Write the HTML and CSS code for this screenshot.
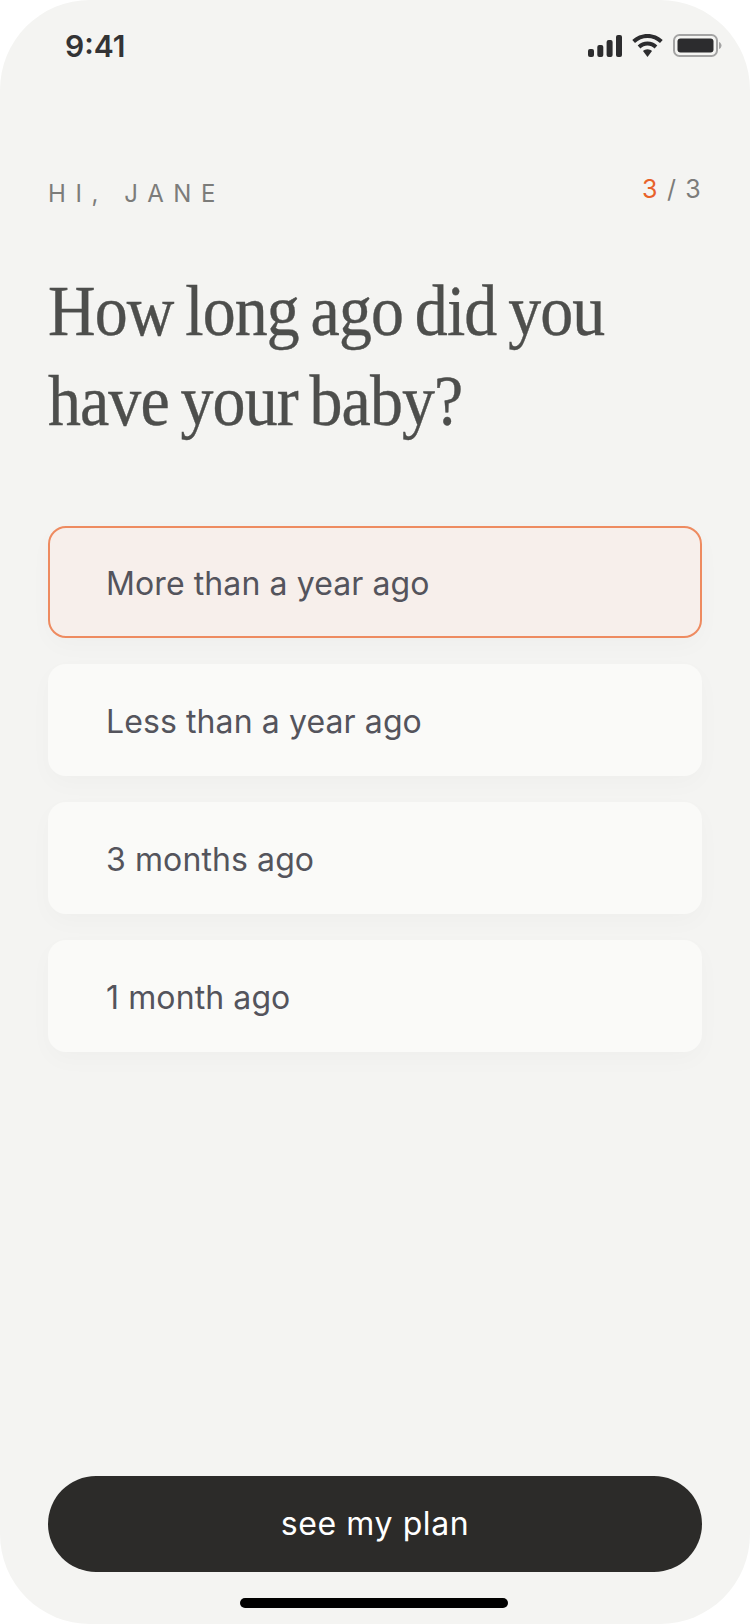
FILE: index.html
```html
<!doctype html>
<html lang="en">
  <head>
    <meta charset="UTF-8" />
    <meta name="viewport" content="width=device-width, initial-scale=1.0" />
    <title>How long ago did you have your baby?</title>
    <link rel="stylesheet" href="styles.css">
  </head>
  <body>
    <div class="screen">
      <div class="status-bar">
        <span class="time">9:41</span>
        <div class="status-icons">
          <svg class="icon-signal" width="34" height="22" viewBox="0 0 34 22">
            <rect x="0" y="14" width="6" height="8" rx="2" />
            <rect x="9.300" y="10" width="6" height="12" rx="2" />
            <rect x="18.600" y="5" width="6" height="17" rx="2" />
            <rect x="28" y="0" width="6" height="22" rx="2" />
          </svg>
          <svg class="icon-wifi" width="31" height="23" viewBox="0 0 31 23">
            <path d="M15.500 0C9.600 0 4.300 2.300 0.300 6.100L3 9C6.300 5.900 10.700 4 15.500 4S24.700 5.900 28 9L30.700 6.100C26.700 2.300 21.400 0 15.500 0Z" />
            <path d="M15.500 7.600C11.700 7.600 8.300 9.100 5.700 11.500L8.400 14.400C10.300 12.700 12.800 11.600 15.500 11.600S20.700 12.700 22.600 14.400L25.300 11.500C22.700 9.100 19.300 7.600 15.500 7.600Z" />
            <path d="M15.500 15.200C13.700 15.200 12.200 15.900 11 17L15.500 23L20 17C18.800 15.900 17.300 15.200 15.500 15.200Z" />
          </svg>
          <svg class="icon-battery" width="49" height="23" viewBox="0 0 49 23">
            <rect x="1" y="1" width="43" height="21" rx="5.500" class="battery-case" />
            <rect x="4.500" y="4.500" width="36" height="14" rx="3" />
            <path d="M46 8C47.500 8.500 48.500 10 48.500 11.500S47.500 14.500 46 15Z" class="battery-nub" />
          </svg>
        </div>
      </div>

      <div class="top-row">
        <span class="greeting">HI, JANE</span>
        <span class="steps"><span class="step-current">3</span> / 3</span>
      </div>

      <h1 class="question">How long ago did you<br>have your baby?</h1>

      <div class="options">
        <div class="option selected">More than a year ago</div>
        <div class="option">Less than a year ago</div>
        <div class="option">3 months ago</div>
        <div class="option">1 month ago</div>
      </div>

      <button class="plan-button">see my plan</button>
      <div class="home-bar"></div>
    </div>
  </body>
</html>
```

FILE: styles.css
```css
body {
  margin: 0;
  background-color: #fff;
  font-family: Inter, "Liberation Sans", sans-serif;
  font-optical-sizing: none;
}
.screen {
  width: 750px;
  height: 1624px;
  box-sizing: border-box;
  padding: 0 48px;
  background-color: #f4f4f2;
  border-radius: 90px;
  overflow: hidden;
  display: flex;
  flex-direction: column;
}
.status-bar {
  display: flex;
  justify-content: space-between;
  align-items: center;
  height: 23px;
  margin-top: 34px;
  padding-left: 17px;
  margin-right: -20px;
}
.time {
  font-size: 30px;
  font-weight: 600;
  color: #333335;
}
.status-icons {
  display: flex;
  align-items: center;
  gap: 10px;
}
.status-icons svg {
  display: block;
  fill: #2c2c2e;
}
.icon-signal {
  margin-top: 1px;
}
.battery-case {
  fill: none;
  stroke: #a4a4a4;
  stroke-width: 2;
}
.battery-nub {
  fill: #a4a4a4;
}
.top-row {
  display: flex;
  justify-content: space-between;
  align-items: flex-start;
  margin-top: 122px;
  height: 30px;
}
.greeting {
  font-size: 24px;
  line-height: 30px;
  letter-spacing: 9.600px;
  color: #7c7c7a;
}
.steps {
  font-size: 25px;
  line-height: 30px;
  letter-spacing: 1.200px;
  color: #7c7c7a;
  margin-top: -5px;
}
.step-current {
  color: #e8622a;
}
.question {
  margin: 57px 0 0;
  font-family: "Liberation Serif", serif;
  font-size: 72px;
  line-height: 90px;
  font-weight: 400;
  letter-spacing: -1px;
  word-spacing: -4px;
  color: #4d4e4c;
  -webkit-text-stroke: 0.400px #4d4e4c;
  white-space: nowrap;
  transform: scaleX(0.915);
  transform-origin: left top;
}
.options {
  display: flex;
  flex-direction: column;
  gap: 26px;
  margin-top: 80px;
}
.option {
  height: 112px;
  box-sizing: border-box;
  display: flex;
  align-items: center;
  padding-left: 58px;
  padding-top: 2px;
  border-radius: 18px;
  background-color: #fafaf8;
  box-shadow: 0 8px 24px rgba(0, 0, 0, 0.025);
  font-size: 32px;
  letter-spacing: 0.100px;
  color: #54545c;
}
.option.selected {
  background-color: #f7efeb;
  border: 2px solid #ee8b60;
  padding-left: 56px;
}
.plan-button {
  margin-top: auto;
  height: 96px;
  flex-shrink: 0;
  border: none;
  border-radius: 48px;
  background-color: #2c2b29;
  color: #fff;
  font-family: inherit;
  font-size: 32px;
  letter-spacing: 0.600px;
  padding-bottom: 3px;
}
.home-bar {
  width: 268px;
  height: 10px;
  flex-shrink: 0;
  margin: 26px 0 16px 192px;
  border-radius: 5px;
  background-color: #000;
}
```
